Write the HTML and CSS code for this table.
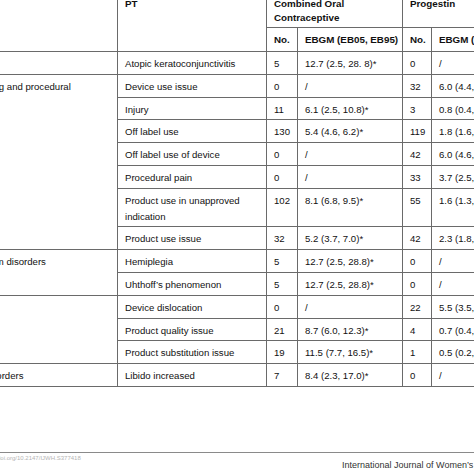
FILE: index.html
```html
<!DOCTYPE html>
<html lang="en">
<head>
<meta charset="utf-8">
<title>Table</title>
<link rel="stylesheet" href="styles.css">
</head>
<body>
<div class="page">
  <div class="table-wrap">
    <table class="data">
      <colgroup>
        <col class="c-soc"><col class="c-pt"><col class="c-no"><col class="c-eb"><col class="c-no2"><col class="c-eb2">
      </colgroup>
      <thead>
        <tr class="h1">
          <th rowspan="2">SOC</th>
          <th rowspan="2">PT</th>
          <th colspan="2">Combined Oral Contraceptive</th>
          <th colspan="2">Progestin</th>
        </tr>
        <tr class="h2">
          <th>No.</th>
          <th>EBGM (EB05, EB95)</th>
          <th>No.</th>
          <th>EBGM (EB05, EB95)</th>
        </tr>
      </thead>
      <tbody>
        <tr><td>Eye disorders</td><td>Atopic keratoconjunctivitis</td><td>5</td><td>12.7 (2.5, 28. 8)*</td><td>0</td><td>/</td></tr>
        <tr><td rowspan="7">Injury, poisoning and procedural complications</td><td>Device use issue</td><td>0</td><td>/</td><td>32</td><td>6.0 (4.4, 8.0)*</td></tr>
        <tr><td>Injury</td><td>11</td><td>6.1 (2.5, 10.8)*</td><td>3</td><td>0.8 (0.4, 1.5)</td></tr>
        <tr><td>Off label use</td><td>130</td><td>5.4 (4.6, 6.2)*</td><td>119</td><td>1.8 (1.6, 2.1)</td></tr>
        <tr><td>Off label use of device</td><td>0</td><td>/</td><td>42</td><td>6.0 (4.6, 7.8)*</td></tr>
        <tr><td>Procedural pain</td><td>0</td><td>/</td><td>33</td><td>3.7 (2.5, 5.0)*</td></tr>
        <tr><td>Product use in unapproved indication</td><td>102</td><td>8.1 (6.8, 9.5)*</td><td>55</td><td>1.6 (1.3, 2.0)</td></tr>
        <tr><td>Product use issue</td><td>32</td><td>5.2 (3.7, 7.0)*</td><td>42</td><td>2.3 (1.8, 3.0)*</td></tr>
        <tr><td rowspan="2">Nervous system disorders</td><td>Hemiplegia</td><td>5</td><td>12.7 (2.5, 28.8)*</td><td>0</td><td>/</td></tr>
        <tr><td>Uhthoff’s phenomenon</td><td>5</td><td>12.7 (2.5, 28.8)*</td><td>0</td><td>/</td></tr>
        <tr><td rowspan="3">Product issues</td><td>Device dislocation</td><td>0</td><td>/</td><td>22</td><td>5.5 (3.5, 7.8)*</td></tr>
        <tr><td>Product quality issue</td><td>21</td><td>8.7 (6.0, 12.3)*</td><td>4</td><td>0.7 (0.4, 1.4)</td></tr>
        <tr><td>Product substitution issue</td><td>19</td><td>11.5 (7.7, 16.5)*</td><td>1</td><td>0.5 (0.2, 1.1)</td></tr>
        <tr><td>Psychiatric disorders</td><td>Libido increased</td><td>7</td><td>8.4 (2.3, 17.0)*</td><td>0</td><td>/</td></tr>
      </tbody>
    </table>
  </div>
  <footer class="foot">
    <div class="foot-left">
      <div class="doi">https://doi.org/10.2147/IJWH.S377418</div>
      <div class="doi doi2">DovePress S377559</div>
    </div>
    <div class="journal">International Journal of Women’s Health 2022:14</div>
  </footer>
</div>
</body>
</html>
```
FILE: styles.css
```css
* { box-sizing: border-box; }
html, body { margin: 0; padding: 0; background: #fff; }
.page {
  width: 474px;
  height: 474px;
  overflow: hidden;
  display: flex;
  flex-direction: column;
  font-family: "Liberation Sans", Arial, sans-serif;
  color: #111;
}
.table-wrap {
  margin-left: -73px;
  margin-top: -8px;
}
.data {
  border-collapse: collapse;
  table-layout: fixed;
  width: 654px;
  font-size: 9.6px;
}
.c-soc { width: 190px; }
.c-pt { width: 149px; }
.c-no { width: 31px; }
.c-eb { width: 105px; }
.c-no2 { width: 29px; }
.c-eb2 { width: 150px; }
.data th, .data td {
  border: 1px solid #6a6a6a;
  text-align: left;
  vertical-align: top;
  padding: 4px 7px 2px;
  line-height: 15.8px;
}
.data td { white-space: nowrap; }
.data td:first-child,
.data td:nth-child(2),
.data tbody tr td[rowspan] + td { white-space: normal; }
.data th {
  font-weight: bold;
  font-size: 9.8px;
}
.h1 th {
  line-height: 13.5px;
  padding: 4px 7px 3px;
}
.h2 th {
  padding: 4px 6px 3px 7px;
  line-height: 16px;
  white-space: nowrap;
}
.foot {
  margin-top: auto;
  height: 22px;
  flex: none;
  border-top: 1.5px solid #8a8a8a;
  display: flex;
}
.foot-left {
  flex: 0 0 363px;
  margin-left: -21px;
}
.doi {
  font-size: 6px;
  line-height: 9px;
  color: #b5b5b5;
  white-space: nowrap;
  margin-top: 1px;
}
.doi2 { margin-top: 3px; margin-left: -38px; }
.journal {
  flex: none;
  white-space: nowrap;
  font-size: 9px;
  line-height: 11px;
  padding-top: 7px;
  color: #333;
}
```
